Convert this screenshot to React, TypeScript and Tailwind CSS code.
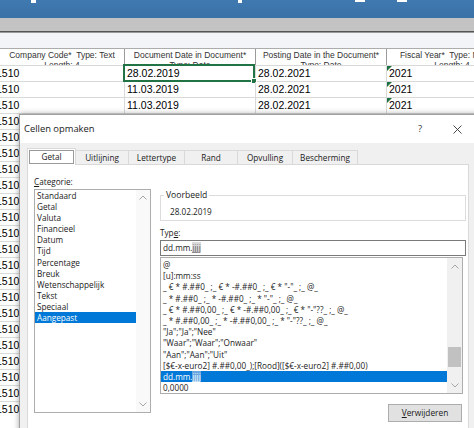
import React from "react";

const categories = [
  "Standaard",
  "Getal",
  "Valuta",
  "Financieel",
  "Datum",
  "Tijd",
  "Percentage",
  "Breuk",
  "Wetenschappelijk",
  "Tekst",
  "Speciaal",
  "Aangepast",
];

const formats = [
  "@",
  "[u]:mm:ss",
  '_ € * #.##0_ ;_ € * -#.##0_ ;_ € * "-"_ ;_ @_ ',
  '_ * #.##0_ ;_ * -#.##0_ ;_ * "-"_ ;_ @_ ',
  '_ € * #.##0,00_ ;_ € * -#.##0,00_ ;_ € * "-"??_ ;_ @_ ',
  '_ * #.##0,00_ ;_ * -#.##0,00_ ;_ * "-"??_ ;_ @_ ',
  '"Ja";"Ja";"Nee"',
  '"Waar";"Waar";"Onwaar"',
  '"Aan";"Aan";"Uit"',
  "[$€-x-euro2] #.##0,00_);[Rood]([$€-x-euro2] #.##0,00)",
  "dd.mm.jjjj",
  "0,0000",
];

const tabs = [
  { label: "Getal", w: "w-[49px]" },
  { label: "Uitlijning", w: "w-[53px]" },
  { label: "Lettertype", w: "w-[56px]" },
  { label: "Rand", w: "w-[53px]" },
  { label: "Opvulling", w: "w-[55px]" },
  { label: "Bescherming", w: "w-[65px]" },
];

const rows = Array.from({ length: 22 }, (_, i) => ({
  doc: i === 0 ? "28.02.2019" : "11.03.2019",
  post: "28.02.2021",
  year: "2021",
}));

const Chevron = ({ up }: { up?: boolean }) => (
  <svg width="8" height="5" viewBox="0 0 8 5" className="block">
    <polyline
      points={up ? "0.5,4.5 4,1 7.5,4.5" : "0.5,0.5 4,4 7.5,0.5"}
      fill="none"
      stroke="#a6a6a6"
      strokeWidth="1"
    />
  </svg>
);

const Sheet = () => (
  <div className="font-['Liberation_Sans',Arial,sans-serif]">
    <div className="relative h-[18px] bg-gradient-to-b from-[#4079b0] to-[#3a72a7]">
      <div className="absolute left-[31px] top-0 h-[3px] w-[5px] bg-white" />
      <div className="absolute left-[238px] top-0 h-[3px] w-[4px] bg-white" />
      <div className="absolute left-[355px] top-0 h-[2px] w-[10px] bg-white" />
      <div className="absolute left-[397px] top-0 h-[2px] w-[10px] bg-white" />
    </div>
    <div className="h-[13px] bg-[#c3c3c3]" />
    <div className="h-px bg-[#555]" />
    <div className="h-px bg-[#9a9a9a]" />
    <div className="h-[15px] bg-[#f2f4f7]" />
    <div className="flex h-[17px] border-t border-[#acacac] bg-white text-[8.5px] leading-[10px] text-[#333]">
      {[
        ["Company Code*  Type: Text", "Length: 4"],
        ["Document Date in Document*", "Type: Date"],
        ["Posting Date in the Document*", "Type: Date"],
        ["Fiscal Year*  Type: Numeric", "Length: 4"],
      ].map(([a, b], i) => (
        <div
          key={i}
          className={`shrink-0 overflow-hidden whitespace-pre border-r border-[#9b9b9b] pt-px text-center ${
            i === 0 ? "w-[125px]" : "w-[131px]"
          }`}
        >
          <div>{a}</div>
          <div>{b}</div>
        </div>
      ))}
    </div>
    {rows.map((r, i) => (
      <div
        key={i}
        className="flex h-[16px] border-t border-[#d9d9d9] text-[10.5px] leading-[15px] text-black"
      >
        <div className="w-[125px] shrink-0 overflow-hidden border-r border-[#d9d9d9]">
          <span className="ml-[-4px]">1510</span>
        </div>
        <div className="relative w-[131px] shrink-0 border-r border-[#d9d9d9] pl-[2px]">
          {r.doc}
          {i === 0 && (
            <div className="absolute -left-[2px] -top-[2px] -bottom-[1px] right-0 border-2 border-[#217346]">
              <div className="absolute -bottom-[3px] -right-[3px] h-[4px] w-[4px] bg-[#217346] ring-1 ring-white" />
            </div>
          )}
        </div>
        <div className="w-[131px] shrink-0 border-r border-[#d9d9d9] pl-[2px]">
          {r.post}
        </div>
        <div className="relative w-[131px] shrink-0 pl-[2px]">
          <div className="absolute left-0 top-0 h-0 w-0 border-r-[5px] border-t-[5px] border-r-transparent border-t-[#1e7145]" />
          {r.year}
        </div>
      </div>
    ))}
  </div>
);

const Dialog = () => (
  <div className="absolute left-[19px] top-[114px] h-[330px] w-[480px] border border-[#a0a0a0] bg-[#f0f0f0] font-['Open_Sans','Noto_Sans',sans-serif] text-[#1a1a1a] shadow-[0_0_6px_rgba(0,0,0,0.35)]">
    <div className="flex h-[28px] items-center bg-white pl-[4px]">
      <span className="text-[9.4px]">Cellen opmaken</span>
      <span className="ml-auto w-[20px] text-center text-[9.5px] text-[#333]">?</span>
      <span className="ml-[17px] mr-[31px] flex w-[20px] justify-center">
        <svg width="9" height="9" viewBox="0 0 9 9">
          <path d="M0.5 0.5 L8.5 8.5 M8.5 0.5 L0.5 8.5" stroke="#333" strokeWidth="0.9" />
        </svg>
      </span>
    </div>
    <div className="pl-[7px] pt-[5px]">
      <div className="flex h-[17px] items-end text-[8.2px]">
        {tabs.map((t, i) =>
          i === 0 ? (
            <div
              key={t.label}
              className={`relative z-10 flex h-[17px] items-center justify-center border border-b-0 border-[#d9d9d9] bg-white ${t.w}`}
            >
              <span className="flex h-[14px] w-[45px] items-center justify-center border border-[#9a9a9a]">
                {t.label}
              </span>
            </div>
          ) : (
            <div
              key={t.label}
              className={`flex h-[15px] items-center justify-center border-r border-t border-[#d9d9d9] ${t.w}`}
            >
              {t.label}
            </div>
          )
        )}
      </div>
      <div className="-mt-px flex h-[300px] w-[442px] border border-[#d9d9d9] bg-white pl-[6px] pt-[9px] text-[8.2px]">
        <div className="w-[117px] shrink-0">
          <div className="h-[15px] leading-[15px]">
            <span className="underline">C</span>ategorie:
          </div>
          <div className="flex h-[224px] border border-[#adadad]">
            <div className="flex-1">
              {categories.map((c, i) => (
                <div
                  key={c}
                  className={`h-[11.1px] whitespace-pre pl-[2px] leading-[11px] ${
                    i === categories.length - 1 ? "bg-[#0078d7] text-white" : ""
                  }`}
                >
                  {c}
                </div>
              ))}
            </div>
            <div className="flex w-[14px] flex-col items-center justify-between bg-[#f9f9f9] py-[5px]">
              <Chevron up />
              <Chevron />
            </div>
          </div>
        </div>
        <div className="ml-[9px] flex w-[306px] shrink-0 flex-col">
          <div className="relative mt-[21px] h-[26px] border border-[#dcdcdc] pl-[9px] pt-[9px] leading-[14px]">
            <span className="absolute -top-[8px] left-[3px] bg-white px-[2px] leading-[14px] text-[8.6px]">
              Voorbeeld
            </span>
            28.02.2019
          </div>
          <div className="mt-[5px] h-[14px] leading-[14px]">
            Typ<span className="underline">e</span>:
          </div>
          <div className="h-[16px] border border-[#7a7a7a] pl-[2px] leading-[14px]">
            dd.mm.<span className="bg-[#dadada] text-[#555]">jjjj</span>
          </div>
          <div className="mt-px flex h-[137px] w-[303px] border border-[#adadad]">
            <div className="flex-1 overflow-hidden pt-px">
              {formats.map((f, i) => (
                <div
                  key={i}
                  className={`h-[11.2px] whitespace-pre pl-[2px] leading-[11px] ${
                    i === 10 ? "bg-[#0078d7] text-white" : "text-[#222]"
                  }`}
                >
                  {i === 10 ? (
                    <>
                      dd.mm.<span className="bg-[#6aa7e0]">jjjj</span>
                    </>
                  ) : (
                    f
                  )}
                </div>
              ))}
            </div>
            <div className="flex w-[15px] flex-col items-center bg-[#f0f0f0] pb-[5px] pt-[6px]">
              <Chevron up />
              <div className="mt-[78px] h-[20px] w-[13px] bg-[#c1c1c1]" />
              <div className="mt-auto">
                <Chevron />
              </div>
            </div>
          </div>
          <div className="mr-[4px] mt-[10px] flex h-[18px] w-[74px] items-center justify-center self-end border border-[#adadad] bg-[#e1e1e1] text-[8.3px]">
            <span className="underline">V</span>erwijderen
          </div>
        </div>
      </div>
    </div>
  </div>
);

export default function App() {
  return (
    <div className="relative h-[428px] w-[474px] overflow-hidden bg-white">
      <Sheet />
      <Dialog />
    </div>
  );
}
